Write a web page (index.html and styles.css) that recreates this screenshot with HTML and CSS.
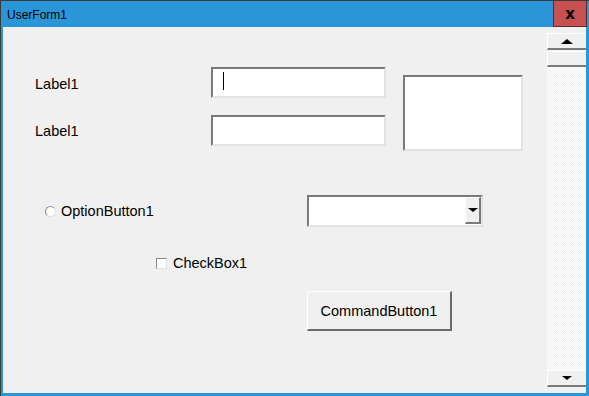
FILE: index.html
```html
<!DOCTYPE html>
<html lang="en">
<head>
    <meta charset="UTF-8">
    <meta name="viewport" content="width=device-width, initial-scale=1.0">
    <title>UserForm1</title>
    <link rel="stylesheet" href="styles.css">
</head>
<body>

    <div class="window">
        <div class="titlebar">
            <span class="title">UserForm1</span>
            <button class="close-btn">x</button>
        </div>
        <div class="client">
            <div class="canvas">
                <span class="label label-1">Label1</span>
                <span class="label label-2">Label1</span>
                <div class="textbox textbox-1"><span class="caret"></span></div>
                <div class="textbox textbox-2"></div>
                <div class="textbox listbox"></div>

                <div class="option">
                    <span class="radio"></span>
                    <span>OptionButton1</span>
                </div>

                <div class="textbox combo">
                    <span class="combo-btn"><span class="arrow-down"></span></span>
                </div>

                <div class="check">
                    <span class="box"></span>
                    <span>CheckBox1</span>
                </div>

                <button class="command">CommandButton1</button>
            </div>
            <div class="scrollbar">
                <span class="scroll-btn"><span class="arrow-up"></span></span>
                <span class="scroll-thumb"></span>
                <span class="scroll-track"></span>
                <span class="scroll-btn"><span class="arrow-down"></span></span>
            </div>
        </div>
    </div>

</body>
</html>
```

FILE: styles.css
```css
body {
    margin: 0;
    padding: 0;
    font-family: "Liberation Sans", Arial, sans-serif;
    background-color: #f0f0f0;
}

.window {
    width: 589px;
    height: 396px;
    box-sizing: border-box;
    display: flex;
    flex-direction: column;
    background-color: #2b96d7;
    border-top: 1px solid #3a3a3a;
    border-left: 1px solid #3a3a3a;
    padding: 0 3px 3px 2px;
}

.titlebar {
    height: 26px;
    display: flex;
    align-items: center;
    justify-content: space-between;
}

.title {
    font-size: 12px;
    color: #000;
    padding-left: 4px;
    padding-top: 1px;
}

.close-btn {
    width: 34px;
    height: 26px;
    align-self: flex-start;
    margin-right: -1px;
    background-color: #c75050;
    border: 1px solid #5a2a2a;
    border-top: none;
    font-family: "DejaVu Sans", sans-serif;
    font-weight: bold;
    font-size: 15px;
    line-height: 20px;
    color: #000;
    padding: 0;
}

.client {
    flex: 1;
    display: flex;
    background-color: #f0f0f0;
}

.canvas {
    flex: 1;
    position: relative;
    font-size: 14.5px;
    color: #000;
}

.label {
    position: absolute;
    left: 32px;
}

.label-1 { top: 49px; }
.label-2 { top: 96px; }

.textbox {
    position: absolute;
    box-sizing: border-box;
    background-color: #fff;
    border-top: 2px solid #7a7a7a;
    border-left: 2px solid #7a7a7a;
    border-right: 2px solid #e3e3e3;
    border-bottom: 2px solid #e3e3e3;
}

.textbox-1 {
    left: 208px;
    top: 40px;
    width: 175px;
    height: 31px;
}

.textbox-2 {
    left: 208px;
    top: 88px;
    width: 175px;
    height: 31px;
}

.listbox {
    left: 400px;
    top: 48px;
    width: 120px;
    height: 76px;
}

.caret {
    position: absolute;
    left: 10px;
    top: 3px;
    width: 1px;
    height: 18px;
    background-color: #000;
}

.option {
    position: absolute;
    left: 42px;
    top: 176px;
    display: flex;
    align-items: center;
    gap: 5px;
}

.radio {
    width: 9px;
    height: 9px;
    border-radius: 50%;
    background-color: #fff;
    border: 1px solid #8a8a8a;
    border-right-color: #e0e0e0;
    border-bottom-color: #e0e0e0;
}

.combo {
    left: 304px;
    top: 168px;
    width: 176px;
    height: 32px;
}

.combo-btn {
    position: absolute;
    right: 0;
    top: 0;
    width: 16px;
    height: 27px;
    box-sizing: border-box;
    background-color: #f0f0f0;
    border-left: 1px solid #fff;
    border-top: 1px solid #fff;
    border-right: 2px solid #7a7a7a;
    border-bottom: 2px solid #7a7a7a;
    display: flex;
    align-items: center;
    justify-content: center;
}

.check {
    position: absolute;
    left: 153px;
    top: 228px;
    display: flex;
    align-items: center;
    gap: 6px;
}

.box {
    width: 9px;
    height: 9px;
    background-color: #fff;
    border: 1px solid #8a8a8a;
    border-right-color: #e0e0e0;
    border-bottom-color: #e0e0e0;
}

.command {
    position: absolute;
    left: 304px;
    top: 264px;
    width: 145px;
    height: 40px;
    box-sizing: border-box;
    background-color: #f0f0f0;
    font-family: "Liberation Sans", Arial, sans-serif;
    font-size: 14.5px;
    color: #000;
    border-top: 1px solid #fff;
    border-left: 1px solid #fff;
    border-right: 2px solid #6a6a6a;
    border-bottom: 2px solid #6a6a6a;
    padding: 0;
}

.scrollbar {
    width: 39px;
    display: flex;
    flex-direction: column;
    padding-top: 6px;
    padding-bottom: 6px;
}

.scroll-btn,
.scroll-thumb {
    height: 17px;
    box-sizing: border-box;
    background-color: #f0f0f0;
    border-top: 1px solid #fff;
    border-left: 1px solid #fff;
    border-bottom: 2px solid #7a7a7a;
    display: flex;
    align-items: center;
    justify-content: center;
}

.scroll-thumb {
    height: 16px;
    margin-top: 1px;
}

.scroll-track {
    flex: 1;
    background-color: #fff;
    background-image: repeating-conic-gradient(#f0f0f0 0 25%, #fff 0 50%);
    background-size: 2px 2px;
}

.arrow-up {
    width: 0;
    height: 0;
    border-left: 6px solid transparent;
    border-right: 6px solid transparent;
    border-bottom: 5px solid #000;
}

.arrow-down {
    width: 0;
    height: 0;
    border-left: 5px solid transparent;
    border-right: 5px solid transparent;
    border-top: 4px solid #000;
}
```
